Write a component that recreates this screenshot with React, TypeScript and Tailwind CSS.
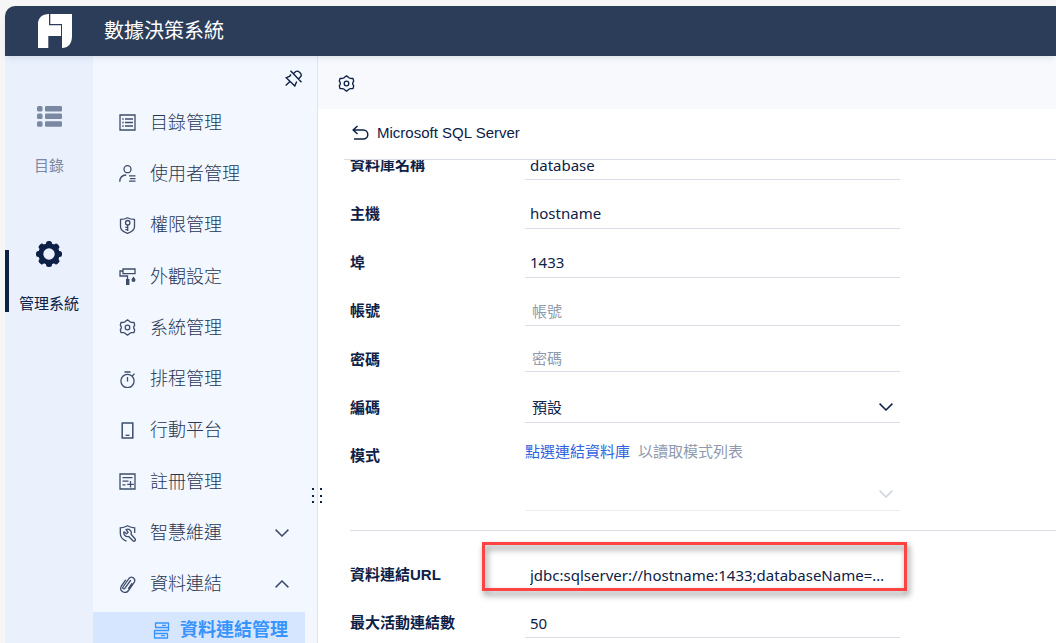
import { useState } from "react";
import type { ReactNode } from "react";

const stroke = { fill: "none", stroke: "currentColor", strokeWidth: 1.3 };

function Icon({ children, classes = "" }: { children: ReactNode; classes?: string }) {
    return <svg viewBox="0 0 17 17" width={17} height={17} className={`shrink-0 ${classes}`} aria-hidden="true" {...stroke}>{children}</svg>;
}

function Chevron({ up = false, classes = "" }: { up?: boolean; classes?: string }) {
    return (
        <svg viewBox="0 0 14 8" width={14} height={8} className={`shrink-0 ${classes}`} fill="none" stroke="currentColor" strokeWidth="1.5" aria-hidden="true">
            <path d={up ? "M.6 7.4 7 1l6.4 6.4" : "M.6.6 7 7 13.4.6"} />
        </svg>
    );
}

const hexGear = (
    <>
        <path strokeLinejoin="round" d="M6.3 2.6 8.5.8l2.200 1.800 1.300.7 3 .2.7 2.700-1 1.700v1.200l1 1.700-.7 2.700-3 .2-1.300.7-2.200 1.800-2.200-1.800-1.300-.7-3-.2-.7-2.700 1-1.700V7.900l-1-1.700.7-2.700 3-.2z" />
        <circle cx="8.5" cy="8.5" r="2.3" />
    </>
);

const menu = [
    { label: "目錄管理", icon: <><path d="M1 1h15v15H1zM6 5h8M6 8.5h8M6 12h8M3.3 5h1.4M3.3 8.5h1.4M3.3 12h1.4" /></> },
    { label: "使用者管理", icon: <><circle cx="8.5" cy="4.2" r="3.5" /><path d="M.8 16.8c0-4 2.5-6.6 6.4-6.8M10 10.9h6.5M11 13.6h5.5M10 16.2h6.5" /></> },
    { label: "權限管理", icon: <><path strokeLinejoin="round" d="M8.5.8C6.5 2 4 2.4 1.5 2.4v7.2c0 3.5 3.2 5.6 7 6.8 3.8-1.2 7-3.3 7-6.8V2.4C13 2.4 10.5 2 8.5.8z" /><circle cx="8.7" cy="5.7" r="2.2" /><path d="M8.7 8v6M8.7 10.3H6.3M8.7 12.6H6.3" /></> },
    { label: "外觀設定", icon: <><path d="M4 1h12v4.6H4zM4 3H1v5h7.5v3" /><path fill="currentColor" stroke="none" d="M7 11h3.4v6H7zM14.5 8.5c1.3 1.7 2 2.7 2 3.6a2 2 0 0 1-4 0c0-.9.7-1.900 2-3.600z" /></> },
    { label: "系統管理", icon: hexGear },
    { label: "排程管理", icon: <><circle cx="8.5" cy="10" r="6.6" /><path d="M5.5 1h6M8.5 6v4.5M13.3 5l2.2-2.4" /></> },
    { label: "行動平台", icon: <><path strokeWidth="1.5" d="M3.2 1h10.6v15H3.2z" /><path d="M6.5 13.3h4" /></> },
    { label: "註冊管理", icon: <><path d="M1 1h15v15H1zM3.5 4.700h10M3.5 8.200h6M3.5 11.800h3M11.500 8v6.500M8.200 11.300h6.600" /></> },
    { label: "智慧維運", arrow: "down", icon: <><path d="M15.700 8V2.800C13 2.800 10.500 2 8.500.8 6.500 2 4 2.800 1.300 2.800v5.500c0 4 2.500 6.500 6.200 7.800" /><path strokeLinejoin="round" d="M7 4.500a3.700 3.700 0 0 1 5 4.800l4 4.500a1.300 1.300 0 0 1-2 2L9.600 11.500A3.700 3.700 0 0 1 5 6.800l2.500 2 1.700-1.500z" /></> },
    { label: "資料連結", arrow: "up", icon: <><path strokeLinecap="round" d="M11.500 4.500 5.800 12.300c-.9 1.200-2.700 0-1.800-1.300l6-8.500c2.300-3 7.300.2 5.300 3.700l-5.800 8.300c-3 4-9.800.8-7.200-4.300l4.200-6M9.500 12.500l3.300-4.800" /></> },
];

const fieldClasses = "w-full border-b border-[#dcdee5] bg-transparent text-[15px] text-[#0d2146] outline-none rounded-none font-['Noto_Sans','Noto_Sans_CJK_TC',sans-serif]";

interface RowProps {
    id: string;
    label: string;
    height?: string;
    children: ReactNode;
}

function Row({ id, label, height = "h-12", children }: RowProps) {
    return (
        <div className={`flex items-center ${height}`}>
            <label htmlFor={id} className="w-[175px] shrink-0 text-[15px] leading-5 font-bold">{label}</label>
            <div className="relative w-full max-w-[375px]">{children}</div>
        </div>
    );
}

export default function App() {
    const [host, setHost] = useState("hostname");
    const [port, setPort] = useState("1433");
    const [database, setDatabase] = useState("database");
    const [url, setUrl] = useState("jdbc:sqlserver://hostname:1433;databaseName=database");
    const [maxActive, setMaxActive] = useState("50");

    return (
        <div className="flex h-screen flex-col overflow-hidden bg-[#f6f6f6] pt-1.5 pl-[5px] text-[#0d2146] font-['Liberation_Sans','Noto_Sans_CJK_TC',sans-serif]">
            <header className="z-10 flex h-[50px] shrink-0 items-center rounded-tl-[10px] bg-[#2c3d5a] pl-[33px] text-white shadow-md shadow-slate-500/10">
                <svg viewBox="0 0 34 34" width={34} height={34} fill="currentColor" aria-hidden="true">
                    <path d="M11 0C4 0 0 4 0 10v24h10.3V22H23V11.3H11z" />
                    <path d="M12.3 0H34v22c0 8-4 12-10 12V10H12.3z" />
                </svg>
                <h1 className="ml-8 text-xl">數據決策系統</h1>
            </header>

            <div className="flex min-h-0 flex-1">
                <nav className="w-[88px] shrink-0 bg-[#eaf1fd] text-[15px]">
                    <a href="#catalog" className="flex flex-col items-center pt-[50px] leading-5 text-[#7a88a1]">
                        <svg viewBox="0 0 25 21" width={25} height={21} fill="currentColor" aria-hidden="true">
                            <rect x="0" y="0" width="5.5" height="5.5" rx="1.5" /><rect x="8" y="0" width="17" height="5.5" rx="1.2" />
                            <rect x="0" y="7.5" width="5.5" height="5.5" rx="1.5" /><rect x="8" y="7.5" width="17" height="5.5" rx="1.2" />
                            <rect x="0" y="15.3" width="5.5" height="5.5" rx="1.5" /><rect x="8" y="15.3" width="17" height="5.5" rx="1.2" />
                        </svg>
                        <span className="mt-[29px]">目錄</span>
                    </a>
                    <a href="#manage" className="mt-[74px] flex h-[62px] flex-col items-center justify-end border-l-4 border-[#0d2146] pr-1 leading-4">
                        <svg viewBox="0 0 26 26" width={26} height={26} className="shrink-0" aria-hidden="true">
                            <g fill="currentColor">
                                <circle cx="13" cy="13" r="10.7" />
                                <rect x="10" y="0" width="6" height="26" rx="2.5" />
                                <rect x="10" y="0" width="6" height="26" rx="2.5" transform="rotate(45 13 13)" />
                                <rect x="10" y="0" width="6" height="26" rx="2.5" transform="rotate(90 13 13)" />
                                <rect x="10" y="0" width="6" height="26" rx="2.5" transform="rotate(135 13 13)" />
                            </g>
                            <circle cx="13" cy="13" r="5.7" fill="#eaf1fd" />
                        </svg>
                        <span className="mt-[29px] whitespace-nowrap">管理系統</span>
                    </a>
                </nav>

                <aside className="relative flex w-[225px] shrink-0 flex-col border-r border-[#dfe4ee] bg-[#f3f7ff] text-[#3d4d6b]">
                    <div className="flex h-[41px] shrink-0 items-center justify-end pt-1 pr-[15px]">
                        <button type="button" aria-label="取消固定" className="text-[#0d2146]">
                            <svg viewBox="0 0 17 17" width={17} height={17} fill="none" stroke="currentColor" strokeWidth="1.4" aria-hidden="true">
                                <path d="M5.5.8 16.500 12.200M8.800 3.200l2-1.700c2.200-1.400 6 1.900 5.400 4.500L13.500 9M6 4.500 4.500 6.300 1.200 7.700l8.600 8.300 1.900-4.500M4.700 11.800.7 15.500" />
                            </svg>
                        </button>
                    </div>
                    <ul className="grid h-[513px] shrink-0 grid-rows-10 text-lg">
                        {menu.map((item) => (
                            <li key={item.label}>
                                <button type="button" className="flex h-full w-full items-center pr-7 pl-[26px] text-left">
                                    <Icon>{item.icon}</Icon>
                                    <span className="ml-3.5 flex-1 font-light text-[#263655]">{item.label}</span>
                                    {item.arrow && <Chevron up={item.arrow == "up"} />}
                                </button>
                            </li>
                        ))}
                    </ul>
                    <a href="#connections" className="mt-0.5 mr-3 flex h-9 shrink-0 items-center bg-[#d6e6ff] pl-[60px] text-lg font-bold text-[#3894fc]">
                        <Icon>
                            <path strokeLinejoin="round" d="M2.500 1h13v4.500h-13zM1.500 11.500h13V16h-13zM15.500 5.500v3h-14v3M9 3.300h4M8 13.700h4" />
                        </Icon>
                        <span className="ml-2.5">資料連結管理</span>
                    </a>
                    <svg viewBox="0 0 12 18" width={12} height={18} className="absolute top-[430px] -right-1.5 cursor-col-resize" fill="#0d2146" aria-hidden="true">
                        <path d="M1 2h2v2H1zM9 2h2v2H9zM1 9h2v2H1zM9 9h2v2H9zM1 15h2v2H1zM9 15h2v2H9z" />
                    </svg>
                </aside>

                <main className="flex min-w-0 flex-1 flex-col bg-white">
                    <div className="flex h-[53px] shrink-0 items-center bg-[#f7f9fd] pt-0.5 pl-5">
                        <Icon>{hexGear}</Icon>
                    </div>
                    <div className="ml-[26px] flex h-[51px] shrink-0 items-center border-b border-[#dcdee5] pb-0.5 pl-2">
                        <button type="button" className="flex items-center text-[15px] leading-5">
                            <svg viewBox="0 0 17 16" width={17} height={16} fill="none" stroke="currentColor" strokeWidth="1.5" aria-hidden="true">
                                <path d="M5.5 1 1.200 5l4.300 4M1.500 5h9.800a4.500 4.500 0 0 1 0 9H2" />
                            </svg>
                            <span className="ml-2">Microsoft SQL Server</span>
                        </button>
                    </div>

                    <div className="min-h-0 flex-1 overflow-hidden pl-8">
                        <form className="-mt-[19px]" onSubmit={(e) => e.preventDefault()}>
                            <Row id="database" label="資料庫名稱">
                                <input id="database" className={`${fieldClasses} h-[30px] pl-[5px]`} value={database} onChange={(e) => setDatabase(e.target.value)} />
                            </Row>
                            <Row id="host" label="主機" height="h-[49px]">
                                <input id="host" className={`${fieldClasses} h-[30px] pl-[5px]`} value={host} onChange={(e) => setHost(e.target.value)} />
                            </Row>
                            <Row id="port" label="埠" height="h-[49px]">
                                <input id="port" className={`${fieldClasses} h-[30px] pl-[5px]`} value={port} onChange={(e) => setPort(e.target.value)} />
                            </Row>
                            <Row id="user" label="帳號">
                                <input id="user" placeholder="帳號" className={`${fieldClasses} h-[30px] pl-[7px] placeholder:text-[#8f9aae]`} />
                            </Row>
                            <Row id="password" label="密碼" height="h-[49px]">
                                <input id="password" type="password" placeholder="密碼" className={`${fieldClasses} h-6 pb-1 pl-[7px] placeholder:text-[#8f9aae]`} />
                            </Row>
                            <Row id="encoding" label="編碼">
                                <select id="encoding" className={`${fieldClasses} h-[30px] appearance-none pl-[7px]`}>
                                    <option>預設</option>
                                </select>
                                <Chevron classes="pointer-events-none absolute top-2.5 right-[7px]" />
                            </Row>

                            <div className="flex items-start pt-2">
                                <label htmlFor="schema" className="w-[175px] shrink-0 pt-1.5 text-[15px] leading-5 font-bold">模式</label>
                                <div className="w-full max-w-[375px]">
                                    <p className="text-[15px] leading-6 text-[#8f9aae]">
                                        <button type="button" className="mr-2 text-[#2f63dd]">點選連結資料庫</button>
                                        以讀取模式列表
                                    </p>
                                    <div className="relative mt-4">
                                        <select id="schema" disabled className={`${fieldClasses} block h-[31px] appearance-none border-[#ededf0] pl-[7px]`} />
                                        <Chevron classes="pointer-events-none absolute top-2.5 right-[7px] text-[#ced3dc]" />
                                    </div>
                                </div>
                            </div>

                            <hr className="mt-[19px] border-[#dcdee5]" />

                            <div className="pt-5">
                                <Row id="url" label="資料連結URL">
                                    <input id="url" className={`${fieldClasses} h-[30px] truncate pr-3 pl-[5px]`} value={url} onChange={(e) => setUrl(e.target.value)} />
                                    <div className="pointer-events-none absolute -top-[18px] -right-[7px] -bottom-px -left-[43px] border-3 border-[#ff4242] drop-shadow-[2px_4px_3px_rgba(0,0,0,0.5)]" />
                                </Row>
                                <Row id="maxActive" label="最大活動連結數">
                                    <input id="maxActive" className={`${fieldClasses} h-[30px] pl-[5px]`} value={maxActive} onChange={(e) => setMaxActive(e.target.value)} />
                                </Row>
                            </div>
                        </form>
                    </div>
                </main>
            </div>
        </div>
    );
}
